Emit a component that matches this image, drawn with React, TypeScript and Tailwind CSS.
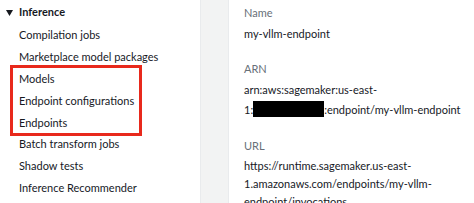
import React from "react";

const navItems = ["Compilation jobs", "Marketplace model packages"];
const boxed = ["Models", "Endpoint configurations", "Endpoints"];
const after = ["Batch transform jobs", "Shadow tests", "Inference Recommender"];

export default function App() {
  return (
    <div
      className="flex w-[474px] h-[203px] overflow-hidden bg-white whitespace-nowrap"
      style={{ fontFamily: 'Lato, "Open Sans", sans-serif' }}
    >
      <div className="w-[200px] shrink-0 pt-[1px] text-[11px] text-[#16191f]">
        <div className="flex items-center h-[23px] pl-[6px] font-bold">
          <svg width="7" height="6" viewBox="0 0 7 6" className="mr-[6px]">
            <path d="M0 0 H7 L3.5 6 Z" fill="#16191f" />
          </svg>
          <span>Inference</span>
        </div>
        {navItems.map((t) => (
          <div key={t} className="h-[21.9px] leading-[21.9px] pl-[19px]">
            {t}
          </div>
        ))}
        <div className="ml-[10px] w-[132px] border-[3px] border-[#e8291c] pl-[6px] -my-[3px]">
          {boxed.map((t) => (
            <div key={t} className="h-[21.9px] leading-[21.9px]">
              {t}
            </div>
          ))}
        </div>
        {after.map((t) => (
          <div key={t} className="h-[21.9px] leading-[21.9px] pl-[19px]">
            {t}
          </div>
        ))}
      </div>
      <div className="w-[29px] shrink-0 bg-[#f2f3f3] border-l border-r border-[#e9ebed]" />
      <div className="flex-1 pl-[15px] pt-[3px] text-[11px] leading-[19px]">
        <div className="text-[#687078]">Name</div>
        <div className="text-[#16191f] mt-[2px]">my-vllm-endpoint</div>
        <div className="text-[#687078] mt-[16px]">ARN</div>
        <div className="text-[#16191f] mt-[2px]">
          <div>arn:aws:sagemaker:us-east-</div>
          <div className="flex items-center h-[20px]">
            <span>1:</span>
            <span className="w-[71px] h-[16px] bg-black shrink-0" />
            <span>:endpoint/my-vllm-endpoint</span>
          </div>
        </div>
        <div className="text-[#687078] mt-[17px]">URL</div>
        <div className="text-[#16191f] mt-[2px] leading-[18px]">
          <div>https://runtime.sagemaker.us-east-</div>
          <div>1.amazonaws.com/endpoints/my-vllm-</div>
          <div>endpoint/invocations</div>
        </div>
      </div>
    </div>
  );
}
